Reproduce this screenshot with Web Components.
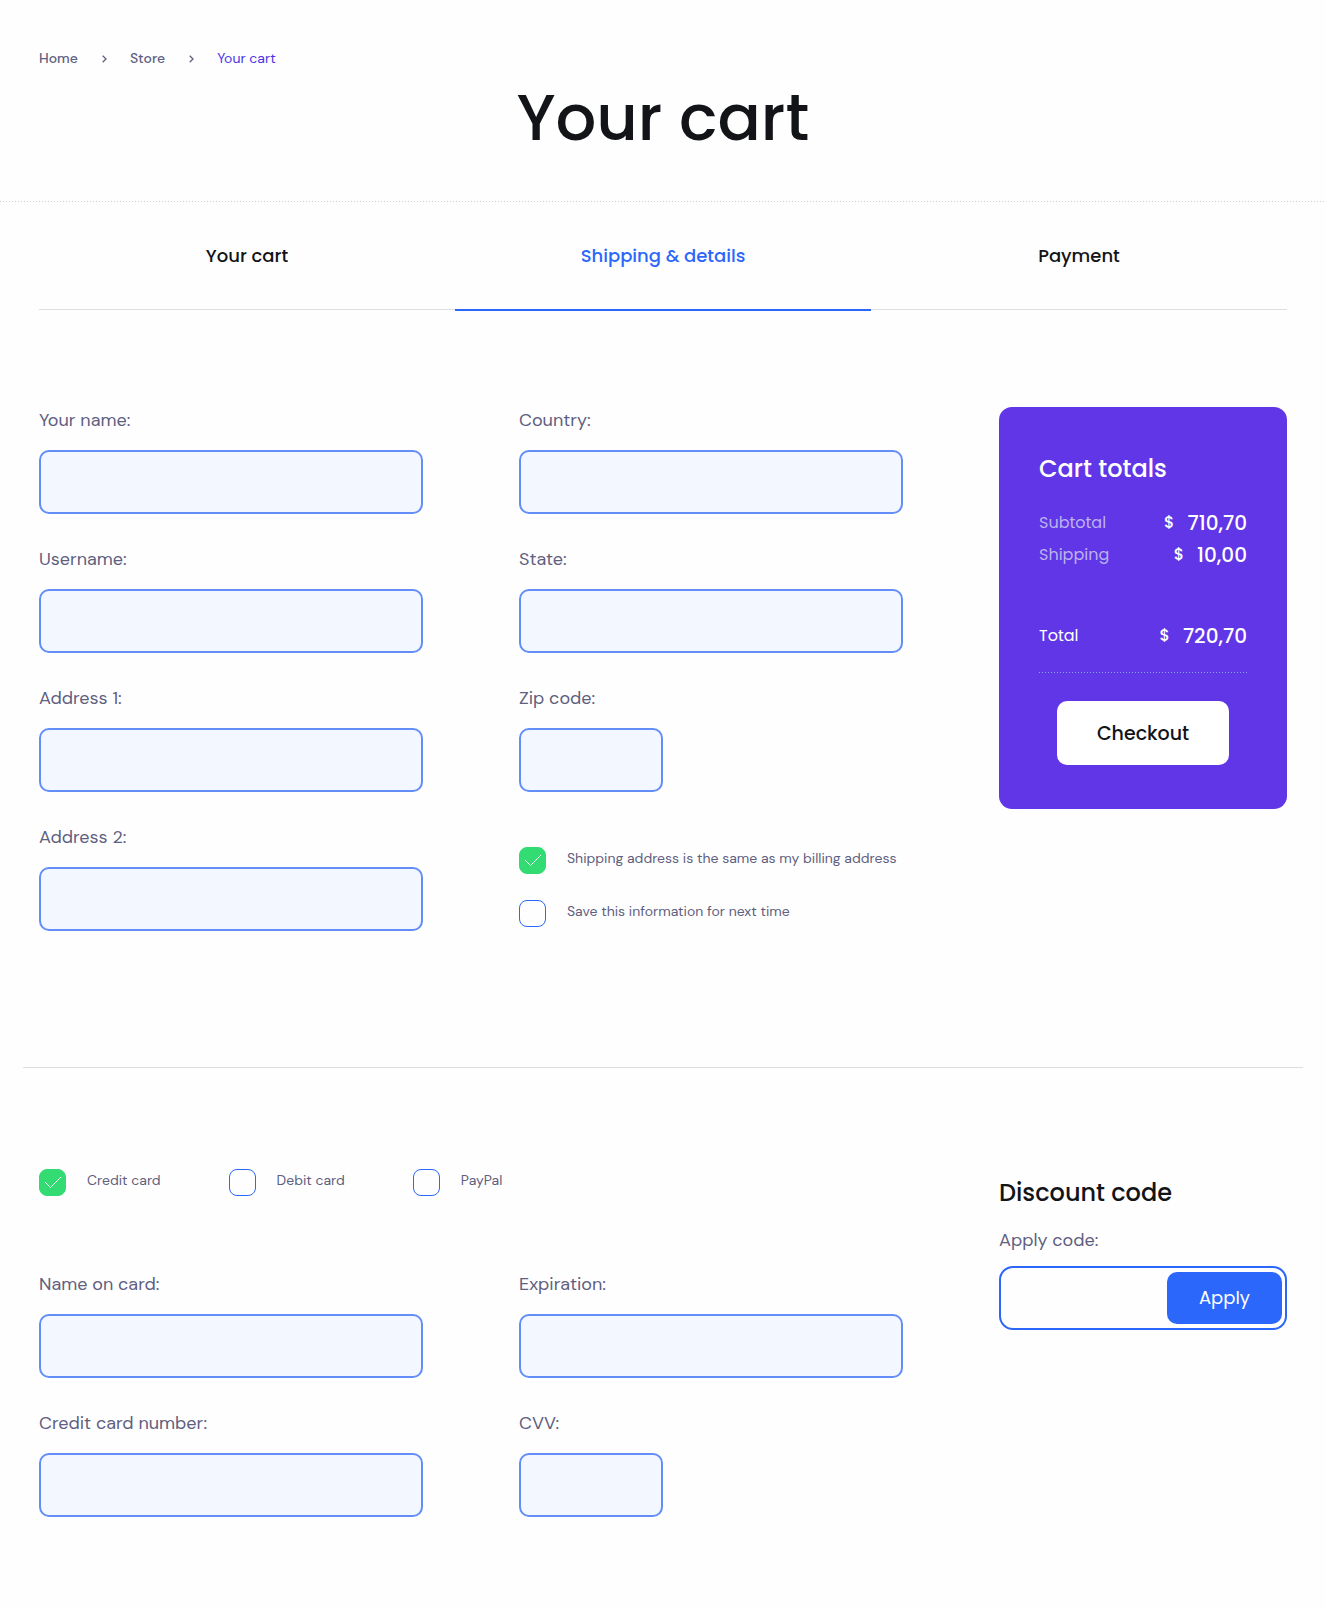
<!DOCTYPE html>
<html lang="en">
<head>
<meta charset="utf-8">
<meta name="viewport" content="width=device-width, initial-scale=1">
<title>Your cart</title>
<style>
    :root {
        --ink: #121418;
        --muted: #5f5f80;
        --blue: #2b67fa;
        --blue-soft: #648ef7;
        --blue-pale: #f3f7ff;
        --violet: #6036e7;
        --green: #32dc72;
        --line: #dedede;
        --heading: Poppins, Inter, "Open Sans", sans-serif;
        --body: "DM Sans", Inter, "Open Sans", sans-serif;
    }

    body {
        margin: 0;
        background: #fefefe;
        color: var(--ink);
        font-family: var(--body);
    }
</style>
</head>
<body>

<checkout-page></checkout-page>

<script>
class CrumbTrail extends HTMLElement {
    constructor() {
        super();
        this.attachShadow({ mode: 'open' });
    }

    connectedCallback() {
        this.shadowRoot.innerHTML = `
            <style>

            :host {
                display: block;
            }

            ol {
                display: flex;
                align-items: center;
                gap: 23px;
                margin: 0;
                padding: 0;
                list-style: none;
                font-size: 14px;
                font-weight: 500;
                line-height: 21px;
            }

            li {
                display: flex;
                align-items: center;
                gap: 24px;
            }

            a {
                color: var(--muted);
                text-decoration: none;
            }

            a[aria-current] {
                color: #4a34e8;
                font-weight: 400;
            }

            svg {
                fill: none;
                stroke: var(--muted);
                stroke-width: 1.3;
            }

            </style>

            <nav aria-label="Breadcrumb">
                <ol></ol>
            </nav>
        `;

        const list = this.shadowRoot.querySelector('ol');
        const names = this.getAttribute('items').split(',');

        names.forEach((name, index) => {
            const last = index === names.length - 1;
            list.insertAdjacentHTML('beforeend', `
                <li>
                    <a href="#" ${last ? 'aria-current="page"' : ''}>${name}</a>
                    ${last ? '' : '<svg width="5" height="8" viewBox="0 0 5 8" aria-hidden="true"><path d="M.7 .8 4 4 .7 7.2"/></svg>'}
                </li>
            `);
        });
    }
}

class StepTabs extends HTMLElement {
    constructor() {
        super();
        this.attachShadow({ mode: 'open' });
    }

    connectedCallback() {
        this.shadowRoot.innerHTML = `
            <style>

            :host {
                display: block;
            }

            nav {
                display: grid;
                grid-template-columns: repeat(3, 1fr);
                border-bottom: 1px solid var(--line);
            }

            a {
                margin-bottom: -2px;
                padding: 40px 0;
                border-bottom: 2px solid transparent;
                color: var(--ink);
                font-family: var(--heading);
                font-size: 18px;
                font-weight: 500;
                line-height: 27px;
                text-align: center;
                text-decoration: none;
            }

            a[aria-current] {
                border-color: var(--blue);
                color: var(--blue);
            }

            </style>

            <nav aria-label="Checkout steps">
                <a href="#">Your cart</a>
                <a href="#" aria-current="step">Shipping &amp; details</a>
                <a href="#">Payment</a>
            </nav>
        `;
    }
}

class TextField extends HTMLElement {
    constructor() {
        super();
        this.attachShadow({ mode: 'open' });
    }

    connectedCallback() {
        this.shadowRoot.innerHTML = `
            <style>

            :host {
                display: block;
            }

            label {
                display: block;
                margin-bottom: 16px;
                color: var(--muted);
                font-size: 18px;
                line-height: 27px;
            }

            input {
                display: block;
                box-sizing: border-box;
                width: 100%;
                height: 64px;
                padding: 0 20px;
                border: 2px solid var(--blue-soft);
                border-radius: 10px;
                background: var(--blue-pale);
                color: var(--ink);
                font: 18px var(--body);
            }

            :host([short]) input {
                width: 144px;
            }

            </style>

            <label for="field"><slot></slot></label>
            <input id="field" type="text">
        `;

        // The slotted text lives outside this root, so name the input with it as well.
        this.shadowRoot.querySelector('input').setAttribute('aria-label', this.textContent.trim());
    }
}

class CheckField extends HTMLElement {
    constructor() {
        super();
        this.attachShadow({ mode: 'open' });
    }

    connectedCallback() {
        this.shadowRoot.innerHTML = `
            <style>

            :host {
                display: block;
            }

            label {
                display: flex;
                align-items: flex-start;
                gap: 21px;
                color: var(--muted);
                font-size: 14px;
                line-height: 22px;
            }

            .box {
                display: grid;
                flex: none;
            }

            .box > * {
                grid-area: 1 / 1;
            }

            input {
                appearance: none;
                width: 27px;
                height: 27px;
                margin: 0;
                border: 1px solid var(--blue);
                border-radius: 8px;
            }

            input:checked {
                border-color: var(--green);
                background: var(--green);
            }

            svg {
                fill: none;
                stroke: #fff;
                pointer-events: none;
                visibility: hidden;
            }

            input:checked + svg {
                visibility: visible;
            }

            </style>

            <label>
                <span class="box">
                    <input type="checkbox">
                    <svg width="27" height="27" viewBox="0 0 27 27" aria-hidden="true"><path d="M6 13l5.5 5.5L22 8"/></svg>
                </span>
                <slot></slot>
            </label>
        `;

        this.shadowRoot.querySelector('input').checked = this.hasAttribute('checked');
    }
}

class CartTotals extends HTMLElement {
    constructor() {
        super();
        this.attachShadow({ mode: 'open' });
    }

    connectedCallback() {
        this.shadowRoot.innerHTML = `
            <style>

            :host {
                display: block;
                box-sizing: border-box;
                padding: 40px 40px 44px;
                border-radius: 13px;
                background: var(--violet);
                color: #fff;
                font-family: var(--heading);
            }

            h2 {
                margin: 0 0 16px;
                font-size: 24px;
                font-weight: 500;
                line-height: 44px;
            }

            dl {
                margin: 0;
            }

            .row {
                display: flex;
                justify-content: space-between;
                line-height: 32px;
            }

            dt {
                color: #bcb2ee;
                font-size: 16px;
            }

            dd {
                display: flex;
                gap: 13px;
                margin: 0;
                font-size: 20px;
                font-weight: 500;
            }

            .sign {
                font-size: 16px;
            }

            .total {
                margin-top: 49px;
                padding-bottom: 21px;
                background: repeating-linear-gradient(90deg, #86a6fa 0 1px, transparent 1px 3px) bottom / 100% 1px no-repeat;
            }

            .total dt {
                color: #fff;
            }

            button {
                display: block;
                height: 64px;
                margin: 28px auto 0;
                padding: 0 40px;
                border: 0;
                border-radius: 10px;
                background: #fff;
                color: var(--ink);
                font: 500 19px var(--heading);
            }

            </style>

            <h2>Cart totals</h2>
            <dl>
                <div class="row"><dt>Subtotal</dt><dd><span class="sign">$</span><span>710,70</span></dd></div>
                <div class="row"><dt>Shipping</dt><dd><span class="sign">$</span><span>10,00</span></dd></div>
                <div class="row total"><dt>Total</dt><dd><span class="sign">$</span><span>720,70</span></dd></div>
            </dl>
            <button type="button">Checkout</button>
        `;
    }
}

class DiscountCode extends HTMLElement {
    constructor() {
        super();
        this.attachShadow({ mode: 'open' });
    }

    connectedCallback() {
        this.shadowRoot.innerHTML = `
            <style>

            :host {
                display: block;
            }

            h2 {
                margin: 0 0 10px;
                font-family: var(--heading);
                font-size: 24px;
                font-weight: 500;
                line-height: 48px;
            }

            label {
                display: block;
                margin-bottom: 12px;
                color: var(--muted);
                font-size: 18px;
                line-height: 27px;
            }

            .control {
                display: flex;
                box-sizing: border-box;
                height: 64px;
                padding: 4px 3px;
                border: 2px solid var(--blue);
                border-radius: 14px;
            }

            input {
                flex: 1;
                min-width: 0;
                padding: 0 16px;
                border: 0;
                background: none;
                color: var(--ink);
                font: 18px var(--body);
            }

            button {
                padding: 0 32px 2px;
                border: 0;
                border-radius: 10px;
                background: var(--blue);
                color: #fff;
                font: 18px var(--heading);
            }

            </style>

            <h2>Discount code</h2>
            <label for="code">Apply code:</label>
            <div class="control">
                <input id="code" type="text">
                <button type="button">Apply</button>
            </div>
        `;
    }
}

class CheckoutPage extends HTMLElement {
    constructor() {
        super();
        this.attachShadow({ mode: 'open' });
    }

    connectedCallback() {
        this.shadowRoot.innerHTML = `
            <style>

            :host {
                display: block;
            }

            .container {
                box-sizing: border-box;
                width: calc(100% - 46px);
                max-width: 1280px;
                margin: 0 auto;
                padding: 0 16px;
            }

            header {
                padding: 48px 0 44px;
                background: repeating-linear-gradient(90deg, #cfcfdd 0 1px, transparent 1px 3px) bottom / 100% 1px no-repeat;
            }

            h1 {
                margin: 9px 0 0;
                font-family: var(--heading);
                font-size: 64px;
                font-weight: 500;
                line-height: 80px;
                text-align: center;
            }

            .section {
                display: grid;
                grid-template-columns: minmax(0, 4fr) minmax(0, 4fr) minmax(0, 3fr);
                column-gap: 96px;
                row-gap: 75px;
                align-items: start;
            }

            .details {
                padding-top: 97px;
                padding-bottom: 136px;
            }

            .payment {
                padding-top: 101px;
                padding-bottom: 92px;
                border-top: 1px solid var(--line);
            }

            .column {
                display: grid;
                gap: 32px;
            }

            .options {
                display: grid;
                gap: 26px;
                padding-top: 23px;
            }

            .methods {
                display: flex;
                grid-column: span 2;
                gap: 68px;
            }

            .payment discount-code {
                grid-area: 1 / 3 / span 2;
            }

            </style>

            <header>
                <div class="container">
                    <crumb-trail items="Home,Store,Your cart"></crumb-trail>
                    <h1>Your cart</h1>
                </div>
            </header>

            <main>
                <div class="container"><step-tabs></step-tabs></div>

                <section class="container section details">
                    <div class="column">
                        <text-field>Your name:</text-field>
                        <text-field>Username:</text-field>
                        <text-field>Address 1:</text-field>
                        <text-field>Address 2:</text-field>
                    </div>
                    <div class="column">
                        <text-field>Country:</text-field>
                        <text-field>State:</text-field>
                        <text-field short>Zip code:</text-field>
                        <div class="options">
                            <check-field checked>Shipping address is the same as my billing address</check-field>
                            <check-field>Save this information for next time</check-field>
                        </div>
                    </div>
                    <cart-totals></cart-totals>
                </section>

                <section class="container section payment">
                    <div class="methods">
                        <check-field checked>Credit card</check-field>
                        <check-field>Debit card</check-field>
                        <check-field>PayPal</check-field>
                    </div>
                    <discount-code></discount-code>
                    <div class="column">
                        <text-field>Name on card:</text-field>
                        <text-field>Credit card number:</text-field>
                    </div>
                    <div class="column">
                        <text-field>Expiration:</text-field>
                        <text-field short>CVV:</text-field>
                    </div>
                </section>
            </main>
        `;
    }
}

customElements.define('crumb-trail', CrumbTrail);
customElements.define('step-tabs', StepTabs);
customElements.define('text-field', TextField);
customElements.define('check-field', CheckField);
customElements.define('cart-totals', CartTotals);
customElements.define('discount-code', DiscountCode);
customElements.define('checkout-page', CheckoutPage);
</script>
</body>
</html>
